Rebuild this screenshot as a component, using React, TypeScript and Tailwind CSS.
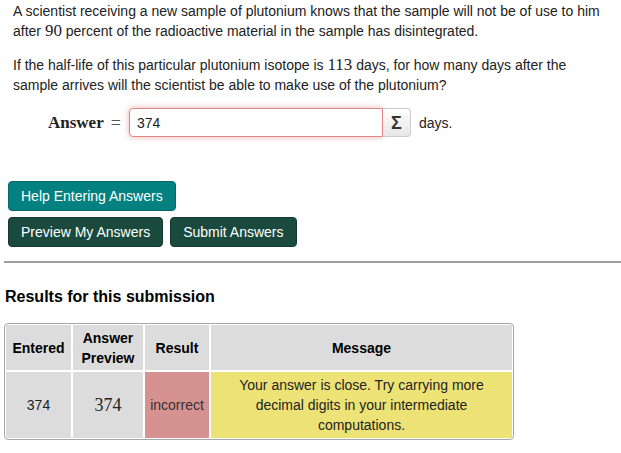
import React from 'react';

const sans = { fontFamily: '"Liberation Sans", Arial, sans-serif' };

const App: React.FC = () => {
  return (
    <div className="w-[621px] h-[453px] bg-white text-[#222] text-[14px] leading-[20px] overflow-hidden" style={sans}>
      {/* Problem text */}
      <div className="pl-[13px] pr-2 pt-[1px]">
        <p>
          A scientist receiving a new sample of plutonium knows that the sample will not be of use to him after{' '}
          <span className="[font-family:'Liberation_Serif',serif] text-[17px] leading-none">90</span> percent of the radioactive material in the sample has disintegrated.
        </p>
        <p className="mt-[14px]">
          If the half-life of this particular plutonium isotope is{' '}
          <span className="[font-family:'Liberation_Serif',serif] text-[17px] leading-none">113</span> days, for how many days after the sample arrives will the scientist be able to make use of the plutonium?
        </p>

        {/* Answer row */}
        <div className="mt-[13px] flex items-center pl-[35px]">
          <span className="[font-family:'Liberation_Serif',serif] text-[17px] font-semibold mr-[7px]">Answer</span>
          <span className="[font-family:'Liberation_Serif',serif] text-[18px] text-[#555] mr-[8px]">=</span>
          <div className="flex h-[29px]">
            <input
              readOnly
              value="374"
              className="w-[254px] h-[29px] border border-[#d9534f]/70 rounded-l-[4px] px-[7px] text-[14px] text-[#222] shadow-[0_0_6px_rgba(217,83,79,0.45)] outline-none"
              style={sans}
            />
            <button className="w-[28px] h-[29px] border border-l-0 border-[#ccc] rounded-r-[4px] bg-gradient-to-b from-white to-[#e6e6e6] flex items-center justify-center text-[18px] font-bold text-[#333]">
              Σ
            </button>
          </div>
          <span className="ml-[8px]">days.</span>
        </div>
      </div>

      {/* Buttons */}
      <div className="pl-[8px] mt-[44px] flex flex-col gap-[6px] items-start">
        <button className="h-[30px] px-[12px] rounded-[4px] bg-[#038080] text-white text-[14px] border border-[#026a6a]">
          Help Entering Answers
        </button>
        <div className="flex gap-[7px]">
          <button className="h-[30px] px-[12px] rounded-[4px] bg-[#1a4a3e] text-white text-[14px] border border-[#13382f]">
            Preview My Answers
          </button>
          <button className="h-[30px] px-[12px] rounded-[4px] bg-[#1a4a3e] text-white text-[14px] border border-[#13382f]">
            Submit Answers
          </button>
        </div>
      </div>

      <hr className="ml-[4px] mt-[14px] border-0 border-t-2 border-[#a0a0a0]" />

      <h2 className="pl-[5px] mt-[24px] text-[16px] font-bold text-black leading-[20px]">Results for this submission</h2>

      {/* Results table */}
      <div className="ml-[4px] mt-[16px] w-[510px] border border-[#a8a8a8] rounded-[4px] bg-white p-px">
        <table className="border-separate border-spacing-[2px] text-[14px] leading-[20px] -m-[2px] w-[calc(100%+4px)]">
          <thead>
            <tr className="h-[45px]">
              <th className="w-[65px] bg-[#dcdcdc] font-bold text-black">Entered</th>
              <th className="w-[70px] bg-[#dcdcdc] font-bold text-black">Answer<br />Preview</th>
              <th className="w-[64px] bg-[#dcdcdc] font-bold text-black">Result</th>
              <th className="bg-[#dcdcdc] font-bold text-black">Message</th>
            </tr>
          </thead>
          <tbody>
            <tr className="h-[66px]">
              <td className="bg-[#dcdcdc] text-center">374</td>
              <td className="bg-[#dcdcdc] text-center [font-family:'Liberation_Serif',serif] text-[18px]">374</td>
              <td className="bg-[#d69191] text-center text-[#333]">incorrect</td>
              <td className="bg-[#ede275] text-center px-[20px]">
                Your answer is close. Try carrying more decimal digits in your intermediate computations.
              </td>
            </tr>
          </tbody>
        </table>
      </div>
    </div>
  );
};

export default App;
